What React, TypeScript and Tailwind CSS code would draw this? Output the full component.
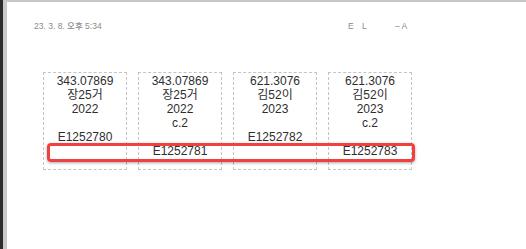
const cards = [
  { lines: ['343.07869', '장25거', '2022', '', 'E1252780', ''] },
  { lines: ['343.07869', '장25거', '2022', 'c.2', '', 'E1252781'] },
  { lines: ['621.3076', '김52이', '2023', '', 'E1252782', ''] },
  { lines: ['621.3076', '김52이', '2023', 'c.2', '', 'E1252783'] },
];

function LabelCard({ lines }: { lines: string[] }) {
  return (
    <div className="w-[84px] h-[98px] border border-dashed border-[#c4c4c4] flex flex-col items-center pt-px">
      {lines.map((line, i) => (
        <div key={i} className="h-[14px] leading-[14px] text-[12px] text-[#2e2e2e]">
          {line || '\u00a0'}
        </div>
      ))}
    </div>
  );
}

export default function App() {
  return (
    <div
      className="w-[526px] h-[249px] flex bg-white overflow-hidden"
      style={{ fontFamily: '"Liberation Sans", Arial, "Noto Sans CJK KR", sans-serif' }}
    >
      <div className="w-[3px] h-full bg-[#2c2c2c]" />
      <div className="w-[4px] h-full bg-[#c9c9c9]" />
      <main className="flex-1 border-t-2 border-[#c8c8c8]">
        <div className="flex items-center h-[14px] mt-[17px] pl-[27px] text-[8.5px] leading-[14px] font-medium text-[#8a8a8a]">
          <span className="w-[314px]">23. 3. 8. 오후 5:34</span>
          <span className="w-[14px]">E</span>
          <span className="w-[33px]">L</span>
          <span>– A</span>
        </div>
        <div className="relative mt-[39px] pl-[36px] flex gap-[11px]">
          {cards.map((c, i) => (
            <LabelCard key={i} lines={c.lines} />
          ))}
          {/* highlight box drawn over the label row */}
          <div className="absolute left-[40px] top-[71px] w-[368px] h-[19px] rounded-[4px] border-[3px] border-[#f0403f] shadow-[0_1px_3px_rgba(0,0,0,0.35)]" />
        </div>
      </main>
    </div>
  );
}
